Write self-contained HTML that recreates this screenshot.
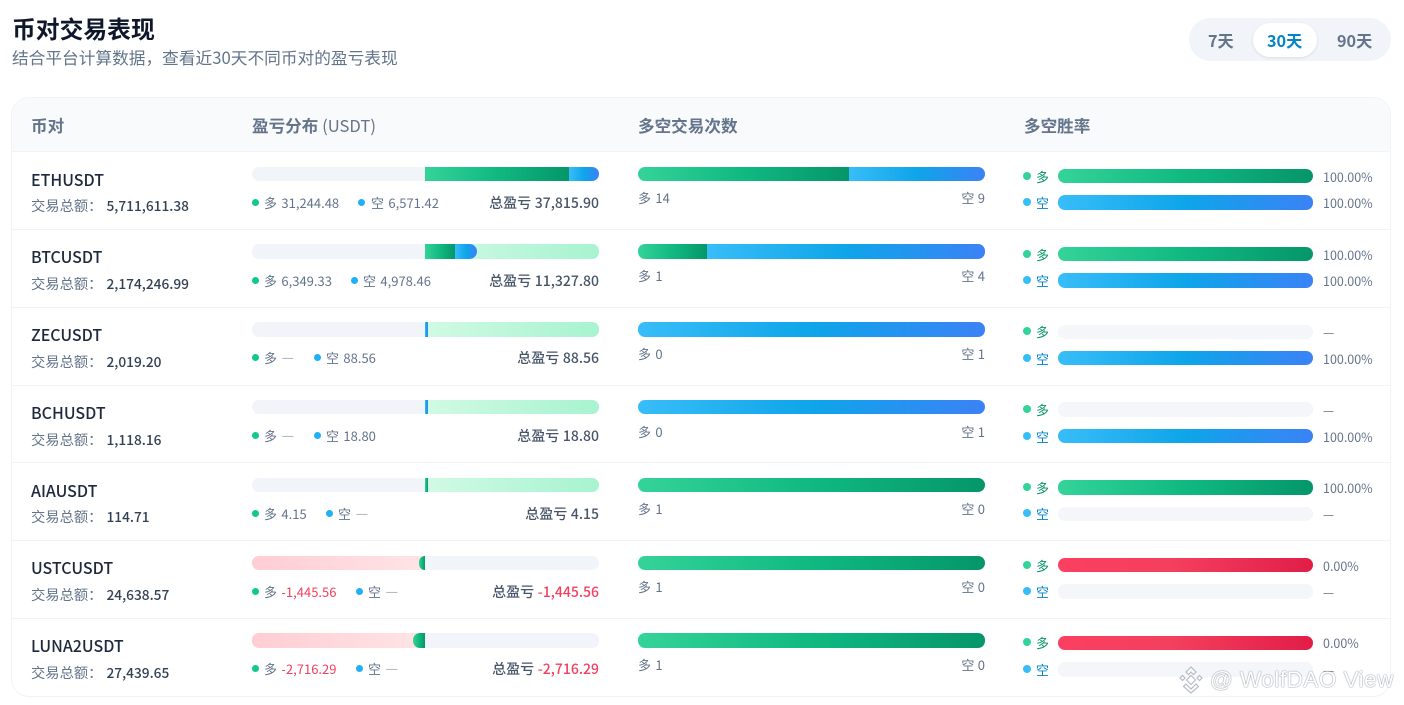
<!DOCTYPE html>
<html lang="zh-CN"><head><meta charset="utf-8"><title>币对交易表现</title>
<style>
*{box-sizing:border-box;margin:0;padding:0}
html,body{width:1404px;height:705px;background:#fff;overflow:hidden}
body{position:relative;font-family:"Noto Sans CJK SC","Liberation Sans",sans-serif;color:#0f172a}
.a,.t,.row,.b{position:absolute}
.t{white-space:nowrap;line-height:20px;height:20px}
h1{position:absolute;left:12px;top:11px;font-size:23.8px;line-height:34px;font-weight:700;color:#0f172a}
.subt{position:absolute;left:12px;top:45px;font-size:16.7px;line-height:24px;color:#64748b}
.tog{position:absolute;left:1189px;top:18px;width:202px;height:43px;border-radius:22px;background:#f1f5f9}
.pill{position:absolute;left:64px;top:5px;width:64px;height:34px;border-radius:17px;background:#fff;box-shadow:0 1px 3px rgba(15,23,42,.1)}
.tog span{position:absolute;font-size:16.2px;line-height:24px;top:10px;font-weight:700;color:#64748b;white-space:nowrap}
.card{position:absolute;left:11px;top:97px;width:1380px;height:600px;border:1px solid #f1f3f7;border-radius:18px;overflow:hidden;background:#fff}
.head{position:absolute;left:0;top:0;width:1378px;height:54px;background:#f8fafc;border-bottom:1px solid #f1f3f7}
.head span{position:absolute;top:15px;font-size:16.6px;line-height:24px;font-weight:700;color:#64748b;white-space:nowrap}
.row{left:0;width:1404px;height:78px}
.sep{position:absolute;left:12px;width:1378px;height:1px;background:#f1f3f7}
.wrap{position:absolute;left:0;top:0;width:1404px;height:705px}
.name{left:31px;top:17px;font-size:16px;font-weight:500;color:#1e293b}
.sub{left:31px;top:44px;font-size:14.3px;color:#64748b}
.sub b{font-weight:500;font-size:13.7px;color:#334155;margin-left:4px}
.tr{left:252px;top:16px;width:347px;height:14px;background:#f1f5f9;border-radius:7px;overflow:hidden}
.b{top:0;height:100%}
.d{position:absolute;width:7px;height:7px;border-radius:50%}
.dg{background:#10c98a}.db{background:#1fb0f5}
.leg{top:42px;font-size:13px;color:#64748b;word-spacing:1.5px}
.tot{top:42px;right:805px;font-size:14px;font-weight:500;color:#475569;word-spacing:.5px}
.neg{color:#f43f5e}
.cl{top:37px;left:638px;font-size:13px;color:#64748b;word-spacing:1.5px}
.cr{top:37px;right:419px;font-size:13px;color:#64748b;word-spacing:.5px}
.ctr{left:638px;top:16px;width:347px;height:14px;border-radius:7px;overflow:hidden;background:#f1f5f9}
.wt{left:1058px;width:255px;height:14px;border-radius:7px;overflow:hidden;background:#f5f6fa}
.wl{left:1036px;font-size:13px;line-height:20px}
.wv{left:1323px;font-size:12.5px;color:#64748b}
.w1{top:18px}.w2{top:44px}
.wl1{top:16px;color:#059669}.wl2{top:42px;color:#0284c7}
.wv1{top:16px}.wv2{top:42px}
.d1,.d2{width:8px;height:8px}
.d1{left:1023px;top:21px;background:#34d399}.d2{left:1023px;top:47px;background:#38bdf8}
.t15{top:15px}.h15{height:15px}
.up .leg,.up .tot{top:41px}
.up .d.dg,.up .d.db{top:47px}
.up .wl1,.up .wv1{top:15px}
.up .d1{top:20px}
.g{background:linear-gradient(90deg,#34d399,#10b981 50%,#059669)}
.bl{background:linear-gradient(90deg,#38bdf8,#0ea5e9 50%,#3b82f6)}
.lg{background:linear-gradient(90deg,#d1fae5,#a7f3d0)}
.pk{background:linear-gradient(90deg,#fecdd3,#ffe4e6)}
.r{background:linear-gradient(90deg,#fb3f60,#f43f5e 45%,#e11d48)}
.wm{position:absolute;left:1210px;top:665px;font-size:22.4px;line-height:30px;color:#fff;letter-spacing:.55px;font-family:"Liberation Sans",sans-serif;text-shadow:0 0 1px #7f8794,0 0 1.5px #989fac;white-space:nowrap}
</style></head><body>
<h1>币对交易表现</h1>
<div class="subt">结合平台计算数据，查看近30天不同币对的盈亏表现</div>
<div class="tog"><div class="pill"></div><span style="left:19px">7天</span><span style="left:78px;color:#0284c7">30天</span><span style="left:148px">90天</span></div>
<div class="card"><div class="head"><span style="left:19px">币对</span><span style="left:240px">盈亏分布 <span style="position:static;font-weight:400">(USDT)</span></span><span style="left:626px">多空交易次数</span><span style="left:1012px">多空胜率</span></div></div>
<div class="wrap">

<div class="sep" style="top:229px"></div>
<div class="sep" style="top:307px"></div>
<div class="sep" style="top:385px"></div>
<div class="sep" style="top:462px"></div>
<div class="sep" style="top:540px"></div>
<div class="sep" style="top:618px"></div>

<!-- ETH -->
<div class="row" style="top:151px">
<div class="t name" style="top:18px">ETHUSDT</div><div class="t sub">交易总额：<b>5,711,611.38</b></div>
<div class="a tr"><div class="b g" style="left:173px;width:144px"></div><div class="b bl" style="left:317px;width:30px"></div></div>
<div class="d dg" style="left:252px;top:48px"></div><div class="t leg" style="left:264px">多 31,244.48</div>
<div class="d db" style="left:358px;top:48px"></div><div class="t leg" style="left:371px">空 6,571.42</div>
<div class="t tot">总盈亏 37,815.90</div>
<div class="a ctr"><div class="b g" style="left:0;width:211px"></div><div class="b bl" style="left:211px;width:136px"></div></div>
<div class="t cl">多 14</div><div class="t cr">空 9</div>
<div class="d d1"></div><div class="t wl wl1">多</div><div class="a wt w1 g"></div><div class="t wv wv1">100.00%</div>
<div class="d d2"></div><div class="t wl wl2">空</div><div class="a wt w2 h15 bl"></div><div class="t wv wv2">100.00%</div>
</div>

<!-- BTC -->
<div class="row" style="top:229px">
<div class="t name">BTCUSDT</div><div class="t sub">交易总额：<b>2,174,246.99</b></div>
<div class="a tr t15 h15"><div class="b lg" style="left:173px;width:174px"></div><div class="b g" style="left:173px;width:30px"></div><div class="b bl" style="left:203px;width:22px;border-radius:0 8px 8px 0"></div></div>
<div class="d dg" style="left:252px;top:48px"></div><div class="t leg" style="left:264px">多 6,349.33</div>
<div class="d db" style="left:351px;top:48px"></div><div class="t leg" style="left:363px">空 4,978.46</div>
<div class="t tot">总盈亏 11,327.80</div>
<div class="a ctr t15 h15"><div class="b g" style="left:0;width:69px"></div><div class="b bl" style="left:69px;width:278px"></div></div>
<div class="t cl">多 1</div><div class="t cr">空 4</div>
<div class="d d1"></div><div class="t wl wl1">多</div><div class="a wt w1 g"></div><div class="t wv wv1">100.00%</div>
<div class="d d2"></div><div class="t wl wl2">空</div><div class="a wt w2 h15 bl"></div><div class="t wv wv2">100.00%</div>
</div>

<!-- ZEC -->
<div class="row up" style="top:307px">
<div class="t name">ZECUSDT</div><div class="t sub">交易总额：<b>2,019.20</b></div>
<div class="a tr t15 h15"><div class="b lg" style="left:173px;width:174px"></div><div class="b bl" style="left:173px;width:3px"></div></div>
<div class="d dg" style="left:252px"></div><div class="t leg" style="left:264px">多 —</div>
<div class="d db" style="left:314px"></div><div class="t leg" style="left:326px">空 88.56</div>
<div class="t tot">总盈亏 88.56</div>
<div class="a ctr t15 h15 bl"></div>
<div class="t cl">多 0</div><div class="t cr">空 1</div>
<div class="d d1"></div><div class="t wl wl1">多</div><div class="a wt w1"></div><div class="t wv wv1">—</div>
<div class="d d2"></div><div class="t wl wl2">空</div><div class="a wt w2 bl"></div><div class="t wv wv2">100.00%</div>
</div>

<!-- BCH -->
<div class="row up" style="top:385px">
<div class="t name">BCHUSDT</div><div class="t sub">交易总额：<b>1,118.16</b></div>
<div class="a tr t15"><div class="b lg" style="left:173px;width:174px"></div><div class="b bl" style="left:173px;width:3px"></div></div>
<div class="d dg" style="left:252px"></div><div class="t leg" style="left:264px">多 —</div>
<div class="d db" style="left:314px"></div><div class="t leg" style="left:326px">空 18.80</div>
<div class="t tot">总盈亏 18.80</div>
<div class="a ctr t15 bl"></div>
<div class="t cl">多 0</div><div class="t cr">空 1</div>
<div class="d d1"></div><div class="t wl wl1">多</div><div class="a wt h15" style="top:17px"></div><div class="t wv wv1">—</div>
<div class="d d2"></div><div class="t wl wl2">空</div><div class="a wt w2 bl"></div><div class="t wv wv2">100.00%</div>
</div>

<!-- AIA -->
<div class="row" style="top:462px">
<div class="t name" style="top:18px">AIAUSDT</div><div class="t sub">交易总额：<b>114.71</b></div>
<div class="a tr"><div class="b lg" style="left:173px;width:174px"></div><div class="b g" style="left:173px;width:3px"></div></div>
<div class="d dg" style="left:252px;top:48px"></div><div class="t leg" style="left:264px">多 4.15</div>
<div class="d db" style="left:326px;top:48px"></div><div class="t leg" style="left:338px">空 —</div>
<div class="t tot">总盈亏 4.15</div>
<div class="a ctr g"></div>
<div class="t cl">多 1</div><div class="t cr">空 0</div>
<div class="d d1"></div><div class="t wl wl1">多</div><div class="a wt w1 h15 g"></div><div class="t wv wv1">100.00%</div>
<div class="d d2"></div><div class="t wl wl2">空</div><div class="a wt" style="top:45px"></div><div class="t wv wv2">—</div>
</div>

<!-- USTC -->
<div class="row" style="top:540px">
<div class="t name">USTCUSDT</div><div class="t sub">交易总额：<b>24,638.57</b></div>
<div class="a tr"><div class="b pk" style="left:0;width:173px"></div><div class="b g" style="left:167px;width:6px;border-radius:6px 0 0 6px"></div></div>
<div class="d dg" style="left:252px;top:48px"></div><div class="t leg" style="left:264px">多 <span class="neg">-1,445.56</span></div>
<div class="d db" style="left:356px;top:48px"></div><div class="t leg" style="left:368px">空 —</div>
<div class="t tot">总盈亏 <span class="neg">-1,445.56</span></div>
<div class="a ctr g"></div>
<div class="t cl">多 1</div><div class="t cr">空 0</div>
<div class="d d1"></div><div class="t wl wl1">多</div><div class="a wt w1 r"></div><div class="t wv wv1">0.00%</div>
<div class="d d2"></div><div class="t wl wl2">空</div><div class="a wt w2 h15"></div><div class="t wv wv2">—</div>
</div>

<!-- LUNA2 -->
<div class="row up" style="top:618px">
<div class="t name">LUNA2USDT</div><div class="t sub">交易总额：<b>27,439.65</b></div>
<div class="a tr t15 h15"><div class="b pk" style="left:0;width:173px"></div><div class="b g" style="left:161px;width:12px;border-radius:7px 0 0 7px"></div></div>
<div class="d dg" style="left:252px"></div><div class="t leg" style="left:264px">多 <span class="neg">-2,716.29</span></div>
<div class="d db" style="left:356px"></div><div class="t leg" style="left:368px">空 —</div>
<div class="t tot">总盈亏 <span class="neg">-2,716.29</span></div>
<div class="a ctr t15 h15 g"></div>
<div class="t cl">多 1</div><div class="t cr">空 0</div>
<div class="d d1"></div><div class="t wl wl1">多</div><div class="a wt w1 r"></div><div class="t wv wv1">0.00%</div>
<div class="d d2"></div><div class="t wl wl2">空</div><div class="a wt w2 h15"></div><div class="t wv wv2">—</div>
</div>
</div>

<svg class="a" style="left:1177px;top:666px" width="28" height="28" viewBox="0 0 28 28" fill="#fff" stroke="#b5bbc6" stroke-width="1.2"><path d="M14 1l5 5-2.500 2.500L14 6 11.500 8.500 9 6z"/><path d="M5 10l2.500-2.500L10 10l-2.500 2.500z" transform="translate(-2 2)"/><path d="M23 10l-2.500-2.500L18 10l2.500 2.500z" transform="translate(2 2)"/><path d="M14 9.500L18.500 14 14 18.500 9.500 14z"/><path d="M9 18l5 5 5-5 2.500 2.500L14 27 6.500 20.500z"/></svg>
<div class="wm">@ WolfDAO View</div>
</body></html>
